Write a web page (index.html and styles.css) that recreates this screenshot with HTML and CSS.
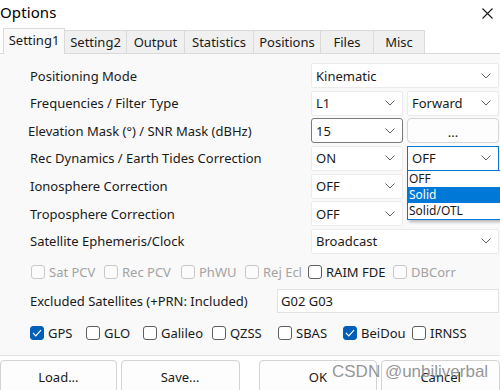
FILE: index.html
```html
<!DOCTYPE html>
<html>
<head>
<meta charset="utf-8">
<link rel="stylesheet" href="styles.css">
</head>
<body>
<div class="titlebar">
  <span class="title">Options</span>
  <svg class="close" width="11" height="11" viewBox="0 0 11 11"><path d="M0.5 0.5 L10.5 10.5 M10.5 0.5 L0.5 10.5" stroke="#1a1a1a" stroke-width="1.1" fill="none"/></svg>
</div>
<div class="tabs">
  <div class="tab active t1">Setting1</div>
  <div class="tab t2">Setting2</div>
  <div class="tab t3">Output</div>
  <div class="tab t4">Statistics</div>
  <div class="tab t5">Positions</div>
  <div class="tab t6">Files</div>
  <div class="tab t7">Misc</div>
</div>
<div class="panel">
  <div class="form">
    <div class="lbl">Positioning Mode</div>
    <div class="combo span2"><span>Kinematic</span><svg class="chev" width="10" height="6" viewBox="0 0 10 6"><polyline points="0.5,0.5 5,5 9.5,0.5" fill="none" stroke="#606060" stroke-width="1"/></svg></div>

    <div class="lbl">Frequencies / Filter Type</div>
    <div class="combo"><span>L1</span><svg class="chev" width="10" height="6" viewBox="0 0 10 6"><polyline points="0.5,0.5 5,5 9.5,0.5" fill="none" stroke="#606060" stroke-width="1"/></svg></div>
    <div class="combo"><span>Forward</span><svg class="chev" width="10" height="6" viewBox="0 0 10 6"><polyline points="0.5,0.5 5,5 9.5,0.5" fill="none" stroke="#606060" stroke-width="1"/></svg></div>

    <div class="lbl lbl-shift">Elevation Mask (°) / SNR Mask (dBHz)</div>
    <div class="combo edit"><span>15</span><svg class="chev" width="10" height="6" viewBox="0 0 10 6"><polyline points="0.5,0.5 5,5 9.5,0.5" fill="none" stroke="#606060" stroke-width="1"/></svg></div>
    <div class="btn-dots">...</div>

    <div class="lbl">Rec Dynamics / Earth Tides Correction</div>
    <div class="combo"><span>ON</span><svg class="chev" width="10" height="6" viewBox="0 0 10 6"><polyline points="0.5,0.5 5,5 9.5,0.5" fill="none" stroke="#606060" stroke-width="1"/></svg></div>
    <div class="combo focus"><span>OFF</span><svg class="chev" width="10" height="6" viewBox="0 0 10 6"><polyline points="0.5,0.5 5,5 9.5,0.5" fill="none" stroke="#606060" stroke-width="1"/></svg>
      <div class="droplist">
        <div class="opt">OFF</div>
        <div class="opt sel">Solid</div>
        <div class="opt">Solid/OTL</div>
      </div>
    </div>

    <div class="lbl">Ionosphere Correction</div>
    <div class="combo"><span>OFF</span><svg class="chev" width="10" height="6" viewBox="0 0 10 6"><polyline points="0.5,0.5 5,5 9.5,0.5" fill="none" stroke="#606060" stroke-width="1"/></svg></div>
    <div></div>

    <div class="lbl">Troposphere Correction</div>
    <div class="combo"><span>OFF</span><svg class="chev" width="10" height="6" viewBox="0 0 10 6"><polyline points="0.5,0.5 5,5 9.5,0.5" fill="none" stroke="#606060" stroke-width="1"/></svg></div>
    <div></div>

    <div class="lbl">Satellite Ephemeris/Clock</div>
    <div class="combo span2"><span>Broadcast</span><svg class="chev" width="10" height="6" viewBox="0 0 10 6"><polyline points="0.5,0.5 5,5 9.5,0.5" fill="none" stroke="#606060" stroke-width="1"/></svg></div>
  </div>

  <div class="checks opts">
    <label class="chk disabled"><span class="box"></span>Sat PCV</label>
    <label class="chk disabled"><span class="box"></span>Rec PCV</label>
    <label class="chk disabled"><span class="box"></span>PhWU</label>
    <label class="chk disabled"><span class="box"></span>Rej Ecl</label>
    <label class="chk"><span class="box"></span>RAIM FDE</label>
    <label class="chk disabled"><span class="box"></span>DBCorr</label>
  </div>

  <div class="excl">
    <div class="excl-lbl">Excluded Satellites (+PRN: Included)</div>
    <div class="textbox">G02 G03</div>
  </div>

  <div class="checks gnss">
    <label class="chk"><span class="box on"><svg width="10" height="8" viewBox="0 0 10 8"><polyline points="1,4 3.8,6.8 9,1.2" fill="none" stroke="#fff" stroke-width="1.2"/></svg></span>GPS</label>
    <label class="chk"><span class="box"></span>GLO</label>
    <label class="chk"><span class="box"></span>Galileo</label>
    <label class="chk"><span class="box"></span>QZSS</label>
    <label class="chk"><span class="box"></span>SBAS</label>
    <label class="chk"><span class="box on"><svg width="10" height="8" viewBox="0 0 10 8"><polyline points="1,4 3.8,6.8 9,1.2" fill="none" stroke="#fff" stroke-width="1.2"/></svg></span>BeiDou</label>
    <label class="chk"><span class="box"></span>IRNSS</label>
  </div>
</div>
<div class="buttons">
  <div class="btn b-load">Load...</div>
  <div class="btn b-save">Save...</div>
  <div class="btn b-ok">OK</div>
  <div class="btn b-cancel">Cancel</div>
</div>
<div class="watermark">CSDN @unbiliverbal</div>
</body>
</html>
```
FILE: styles.css
```css
* { box-sizing: border-box; }
html, body {
  margin: 0;
  width: 500px;
  height: 390px;
  overflow: hidden;
  background: #ffffff;
}
body {
  position: relative;
  font-family: "Noto Sans", "Open Sans", sans-serif;
  font-size: 13px;
  color: #1a1a1a;
}

/* title bar */
.titlebar {
  height: 28px;
  display: flex;
  align-items: center;
  padding-bottom: 4px;
}
.title {
  font-size: 15px;
  color: #000;
  letter-spacing: 0.1px;
}
.close {
  margin-left: auto;
  margin-right: 7px;
  margin-top: 3px;
}

/* tabs */
.tabs {
  height: 26px;
  display: flex;
  align-items: flex-end;
  padding-left: 3px;
  border-bottom: 1px solid #dadada;
}
.tab {
  height: 23px;
  border: 1px solid #dadada;
  border-bottom: none;
  margin-left: -1px;
  background: #f0f0f0;
  display: flex;
  align-items: center;
  justify-content: center;
  font-size: 13px;
  color: #1a1a1a;
}
.tab.active {
  height: 26px;
  margin-left: 0;
  margin-bottom: -1px;
  background: #f9f9f9;
  position: relative;
  z-index: 1;
  padding-bottom: 3px;
}
.t1 { width: 62px; }
.t2 { width: 63px; }
.t3 { width: 59px; }
.t4 { width: 70px; }
.t5 { width: 68px; }
.t6 { width: 54px; }
.t7 { width: 52px; }

/* panel */
.panel {
  height: 302px;
  background: #f9f9f9;
  border-bottom: 1px solid #e2e2e2;
  padding-top: 9px;
}
.form {
  display: grid;
  grid-template-columns: 277px 92px 92px;
  grid-auto-rows: 25px;
  column-gap: 4px;
  row-gap: 2.67px;
  padding-left: 30px;
}
.lbl {
  align-self: center;
  white-space: nowrap;
}
.lbl-shift { margin-left: -2px; }
.span2 { grid-column: span 2; }
.combo {
  position: relative;
  background: #ffffff;
  border: 1px solid #ebebeb;
  border-radius: 2px;
  display: flex;
  align-items: center;
  padding-left: 4px;
  padding-right: 7px;
}
.combo span { flex: 1; }
.combo.edit {
  border-color: #7a7a7a;
  border-radius: 3px;
}
.combo.focus {
  border-color: #0078d7;
  border-radius: 0;
}
.chev { flex: none; }
.btn-dots {
  background: #fdfdfd;
  border: 1px solid #d6d6d6;
  border-radius: 4px;
  display: flex;
  align-items: center;
  justify-content: center;
  padding-top: 3px;
  font-size: 13px;
}
.droplist {
  position: absolute;
  left: -1px;
  top: 100%;
  width: 94px;
  background: #fff;
  border: 1px solid #0078d7;
  box-shadow: 2px 2px 3px rgba(0, 0, 0, 0.28);
  z-index: 5;
}
.opt {
  height: 16px;
  line-height: 16px;
  padding-left: 1px;
  font-size: 12px;
  overflow: hidden;
}
.opt.sel {
  background: #0078d7;
  color: #fff;
}

/* checkboxes */
.checks {
  display: grid;
  height: 18px;
  align-items: center;
}
.opts {
  margin-top: 9px;
  padding-left: 31px;
  grid-template-columns: 73px 77px 64px 63px 85px auto;
}
.gnss {
  margin-top: 11px;
  padding-left: 30px;
  grid-template-columns: 56px 57px 69px 66px 65px 69px auto;
}
.chk {
  display: flex;
  align-items: center;
  gap: 4px;
  white-space: nowrap;
}
.chk.disabled { color: #a3a3a3; }
.box {
  width: 14px;
  height: 14px;
  border: 1px solid #5f5f5f;
  border-radius: 3px;
  background: #fff;
  flex: none;
  display: flex;
  align-items: center;
  justify-content: center;
}
.chk.disabled .box { border-color: #c8c8c8; background: #fbfbfb; }
.box.on {
  background: #005fb8;
  border-color: #005fb8;
}

/* excluded */
.excl {
  margin-top: 8px;
  display: flex;
  align-items: center;
  padding-left: 30px;
  height: 24px;
}
.excl-lbl {
  width: 247px;
  white-space: nowrap;
}
.textbox {
  width: 222px;
  height: 24px;
  background: #fff;
  border: 1px solid #e2e2e2;
  display: flex;
  align-items: center;
  padding-left: 3px;
}

/* buttons */
.buttons {
  display: flex;
  margin-top: 4px;
  gap: 4px;
}
.btn {
  height: 34px;
  background: #fdfdfd;
  border: 1px solid #d3d3d3;
  border-radius: 4px;
  display: flex;
  align-items: center;
  justify-content: center;
  font-size: 13px;
}
.b-load { width: 118px; }
.b-save { width: 120px; }
.b-ok { width: 120px; margin-left: 15px; }
.b-cancel { width: 120px; }

.watermark {
  position: absolute;
  left: 332px;
  top: 362px;
  font-family: "Liberation Sans", Arial, sans-serif;
  font-size: 17px;
  color: rgba(130, 130, 130, 0.85);
  white-space: nowrap;
}
```
